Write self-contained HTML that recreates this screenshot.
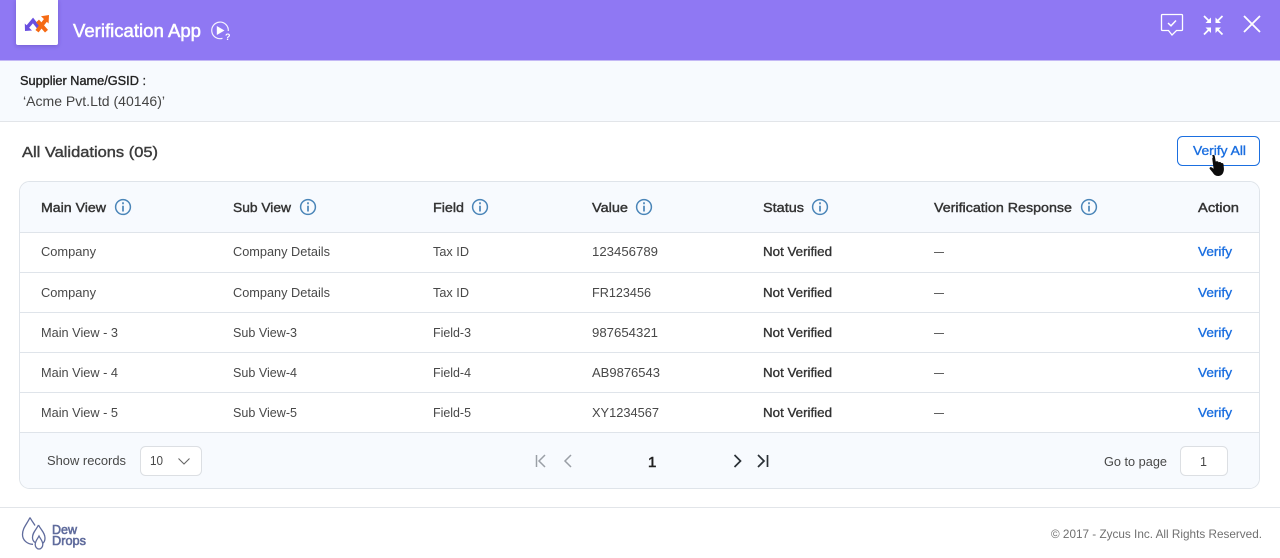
<!DOCTYPE html>
<html><head><meta charset="utf-8"><title>Verification App</title>
<style>
html,body{margin:0;padding:0;width:1280px;height:558px;overflow:hidden;background:#fff}
svg{display:block}
text{font-family:"Liberation Sans",sans-serif;font-size:13px;fill:#484848}
.h{fill:#333;stroke:#333;stroke-width:.4}
.s{fill:#333;stroke:#333;stroke-width:.35}
.v{fill:#1b6fe0;stroke:#1b6fe0;stroke-width:.35}
.i circle{fill:none;stroke:#4a85b8;stroke-width:1.5}
.i path{fill:none;stroke:#4a85b8;stroke-width:1.7}
</style></head><body>
<svg width="1280" height="558" viewBox="0 0 1280 558" xmlns="http://www.w3.org/2000/svg">
<defs>
<filter id="sh" x="-30%" y="-30%" width="160%" height="160%"><feDropShadow dx="0" dy="1" stdDeviation="2" flood-color="#3a2a90" flood-opacity=".35"/></filter>
<g id="info" class="i"><circle cx="0" cy="0" r="7.4"/><path d="M0-1.200V4.500M0-4.800V-2.800"/></g>
</defs>
<rect width="1280" height="558" fill="#fff"/>
<rect width="1280" height="60" fill="#8f78f3"/>
<rect y="60" width="1280" height="1" fill="#c4b8f5"/>
<rect y="61" width="1280" height="60" fill="#f7fafe"/>
<rect y="121" width="1280" height="1" fill="#e2e5e9"/>
<!-- logo -->
<path d="M16 0H58V43a2 2 0 0 1-2 2H18a2 2 0 0 1-2-2Z" fill="#fff" filter="url(#sh)"/>
<path d="M27.500 27L33 20.500L38.500 27.500" fill="none" stroke="#6a4fe0" stroke-width="3.600"/>
<path d="M24.800 23.500L25 31L32 30.500Z" fill="#6a4fe0"/>
<path d="M37.500 21L46.500 31.200M37 31.200L46.500 19" fill="none" stroke="#f56a14" stroke-width="4"/>
<path d="M41 16.200L49 15L48.600 23.500Z" fill="#f56a14"/>
<text x="73" y="37" style="font-size:18px;fill:#fff;stroke:#fff;stroke-width:.5" textLength="128" lengthAdjust="spacingAndGlyphs">Verification App</text>
<!-- video help icon -->
<path d="M222.500 38.300A8.300 8.300 0 1 1 228.300 31" fill="none" stroke="#fff" stroke-width="1.200" opacity=".9"/>
<path d="M216.800 26L224.500 30.500L216.800 35Z" fill="#fff"/>
<text x="225" y="40" style="font-size:9px;fill:#fff;font-weight:bold">?</text>
<!-- header right icons -->
<path d="M1162.500 14.500H1181.500a1 1 0 0 1 1 1V29.500a1 1 0 0 1-1 1H1176.500L1172 35L1168.500 30.500H1162.500a1 1 0 0 1-1-1V15.500a1 1 0 0 1 1-1Z" fill="none" stroke="#fff" stroke-width="1.300"/>
<path d="M1168 23L1171 25.800L1176 20.500" fill="none" stroke="#fff" stroke-width="1.500"/>
<g fill="none" stroke="#fff" stroke-width="1.800">
<path d="M1204 16L1209 21"/><path d="M1222.500 16L1217.500 21"/><path d="M1204 34.500L1209 29.500"/><path d="M1222.500 34.500L1217.500 29.500"/>
<path d="M1244 16L1260 32M1260 16L1244 32"/>
</g>
<g fill="#fff">
<path d="M1211 23H1205.500L1211 17.500Z"/><path d="M1215.500 23H1221L1215.500 17.500Z"/><path d="M1211 27.500H1205.500L1211 33Z"/><path d="M1215.500 27.500H1221L1215.500 33Z"/>
</g>
<!-- supplier -->
<text x="20" y="85" style="fill:#222;stroke:#222;stroke-width:.35;font-size:13px" textLength="126" lengthAdjust="spacingAndGlyphs">Supplier Name/GSID :</text>
<text x="23" y="106" style="font-size:14px;fill:#444" textLength="142" lengthAdjust="spacingAndGlyphs">‘Acme Pvt.Ltd (40146)’</text>
<text x="22" y="157" style="font-size:15px;fill:#3c3c3c;stroke:#3c3c3c;stroke-width:.4" textLength="136" lengthAdjust="spacingAndGlyphs">All Validations (05)</text>
<!-- verify all -->
<rect x="1177.500" y="136.500" width="82" height="29" rx="5" fill="#fff" stroke="#1b6fe0"/>
<text x="1193" y="155" class="v" textLength="53" lengthAdjust="spacingAndGlyphs">Verify All</text>
<!-- card -->
<rect x="19.500" y="181.500" width="1240" height="307" rx="10" fill="#fff" stroke="#dfe4ea"/>
<path d="M20 232V192a10 10 0 0 1 10-10H1249a10 10 0 0 1 10 10V232Z" fill="#f7fafe"/>
<path d="M20 433H1259V478a10 10 0 0 1-10 10H30a10 10 0 0 1-10-10Z" fill="#f7fafe"/>
<g fill="#dfe4ea"><rect x="20" y="232" width="1239" height="1"/><rect x="20" y="272" width="1239" height="1"/><rect x="20" y="312" width="1239" height="1"/><rect x="20" y="352" width="1239" height="1"/><rect x="20" y="392" width="1239" height="1"/><rect x="20" y="432" width="1239" height="1"/></g>
<!-- table head -->
<text x="41" y="212" class="h" textLength="65" lengthAdjust="spacingAndGlyphs">Main View</text><use href="#info" x="123" y="207"/>
<text x="233" y="212" class="h" textLength="58" lengthAdjust="spacingAndGlyphs">Sub View</text><use href="#info" x="308" y="207"/>
<text x="433" y="212" class="h" textLength="31" lengthAdjust="spacingAndGlyphs">Field</text><use href="#info" x="480" y="207"/>
<text x="592" y="212" class="h" textLength="36" lengthAdjust="spacingAndGlyphs">Value</text><use href="#info" x="644" y="207"/>
<text x="763" y="212" class="h" textLength="41" lengthAdjust="spacingAndGlyphs">Status</text><use href="#info" x="820" y="207"/>
<text x="934" y="212" class="h" textLength="138" lengthAdjust="spacingAndGlyphs">Verification Response</text><use href="#info" x="1089" y="207"/>
<text x="1198" y="212" class="h" textLength="41" lengthAdjust="spacingAndGlyphs">Action</text>
<!-- rows -->
<text x="41" y="256" textLength="55" lengthAdjust="spacingAndGlyphs">Company</text><text x="233" y="256" textLength="97" lengthAdjust="spacingAndGlyphs">Company Details</text><text x="433" y="256" textLength="36" lengthAdjust="spacingAndGlyphs">Tax ID</text><text x="592" y="256" textLength="66" lengthAdjust="spacingAndGlyphs">123456789</text><text x="763" y="256" class="s" textLength="69" lengthAdjust="spacingAndGlyphs">Not Verified</text><text x="934" y="256" textLength="10" lengthAdjust="spacingAndGlyphs">—</text><text x="1198" y="256" class="v" textLength="34" lengthAdjust="spacingAndGlyphs">Verify</text>
<text x="41" y="297" textLength="55" lengthAdjust="spacingAndGlyphs">Company</text><text x="233" y="297" textLength="97" lengthAdjust="spacingAndGlyphs">Company Details</text><text x="433" y="297" textLength="36" lengthAdjust="spacingAndGlyphs">Tax ID</text><text x="592" y="297" textLength="59" lengthAdjust="spacingAndGlyphs">FR123456</text><text x="763" y="297" class="s" textLength="69" lengthAdjust="spacingAndGlyphs">Not Verified</text><text x="934" y="297" textLength="10" lengthAdjust="spacingAndGlyphs">—</text><text x="1198" y="297" class="v" textLength="34" lengthAdjust="spacingAndGlyphs">Verify</text>
<text x="41" y="337" textLength="77" lengthAdjust="spacingAndGlyphs">Main View - 3</text><text x="233" y="337" textLength="64" lengthAdjust="spacingAndGlyphs">Sub View-3</text><text x="433" y="337" textLength="38" lengthAdjust="spacingAndGlyphs">Field-3</text><text x="592" y="337" textLength="66" lengthAdjust="spacingAndGlyphs">987654321</text><text x="763" y="337" class="s" textLength="69" lengthAdjust="spacingAndGlyphs">Not Verified</text><text x="934" y="337" textLength="10" lengthAdjust="spacingAndGlyphs">—</text><text x="1198" y="337" class="v" textLength="34" lengthAdjust="spacingAndGlyphs">Verify</text>
<text x="41" y="377" textLength="77" lengthAdjust="spacingAndGlyphs">Main View - 4</text><text x="233" y="377" textLength="64" lengthAdjust="spacingAndGlyphs">Sub View-4</text><text x="433" y="377" textLength="38" lengthAdjust="spacingAndGlyphs">Field-4</text><text x="592" y="377" textLength="68" lengthAdjust="spacingAndGlyphs">AB9876543</text><text x="763" y="377" class="s" textLength="69" lengthAdjust="spacingAndGlyphs">Not Verified</text><text x="934" y="377" textLength="10" lengthAdjust="spacingAndGlyphs">—</text><text x="1198" y="377" class="v" textLength="34" lengthAdjust="spacingAndGlyphs">Verify</text>
<text x="41" y="417" textLength="77" lengthAdjust="spacingAndGlyphs">Main View - 5</text><text x="233" y="417" textLength="64" lengthAdjust="spacingAndGlyphs">Sub View-5</text><text x="433" y="417" textLength="38" lengthAdjust="spacingAndGlyphs">Field-5</text><text x="592" y="417" textLength="67" lengthAdjust="spacingAndGlyphs">XY1234567</text><text x="763" y="417" class="s" textLength="69" lengthAdjust="spacingAndGlyphs">Not Verified</text><text x="934" y="417" textLength="10" lengthAdjust="spacingAndGlyphs">—</text><text x="1198" y="417" class="v" textLength="34" lengthAdjust="spacingAndGlyphs">Verify</text>
<!-- table footer -->
<text x="47" y="465" textLength="79" lengthAdjust="spacingAndGlyphs">Show records</text>
<rect x="140.500" y="446.500" width="61" height="29" rx="5" fill="#fff" stroke="#dcdfe3"/>
<text x="150" y="465" textLength="13" lengthAdjust="spacingAndGlyphs">10</text>
<path d="M178.500 458.500L184 464L189.500 458.500" fill="none" stroke="#666" stroke-width="1.100"/>
<g fill="none" stroke-width="1.500">
<path d="M536.500 455V467M545 455L539 461L545 467" stroke="#9a9fa6"/>
<path d="M571 455L565 461L571 467" stroke="#9a9fa6"/>
<path d="M734.500 455L740.500 461L734.500 467" stroke="#2a3036" stroke-width="1.700"/>
<path d="M758 455L764 461L758 467" stroke="#2a3036" stroke-width="1.700"/>
<path d="M767.500 455V467" stroke="#2a3036" stroke-width="1.700"/>
</g>
<text x="648" y="467" style="font-size:15px;fill:#222;stroke:#222;stroke-width:.6">1</text>
<text x="1104" y="466" textLength="63" lengthAdjust="spacingAndGlyphs">Go to page</text>
<rect x="1180.500" y="446.500" width="47" height="29" rx="5" fill="#fff" stroke="#dcdfe3"/>
<text x="1200" y="466" style="font-size:12.500px">1</text>
<!-- cursor -->
<path d="M1212.200 155.300c1-.8 2.400-.3 2.600 1l.9 5.200 .7-.2c1-.2 1.900 .1 2.200 .9l.6-.1c1.100-.2 1.900 .2 2.100 1c1.100-.2 2 .2 2.200 1.100l.4 4.300c.2 3.300-1.300 7.400-5.500 7.500c-3 .1-4.400-1.400-5.700-3.500l-2.900-3.500c-.8-1.100 .6-2.600 1.900-1.600l1.900 1.400l-1.300-9.700c-.1-.8 .1-1.400 .6-1.700Z" fill="#0c0c0c"/>
<!-- footer -->
<rect y="507" width="1280" height="1" fill="#e2e5e9"/>
<g fill="none" stroke="#5f6b9c" stroke-width="1.300">
<path d="M30 517.500C27 524 22.500 528 22.500 534.500C22.500 540 27 544.300 33 544.300M30 517.500C31.500 520.500 33.500 523 35 525.500"/>
<path d="M38.500 525C36 530 32.500 532.500 32.500 537.500C32.500 539.500 33.500 541.500 35 542.500M38.500 525C41 530 45 533 45 538C45 540.500 44 542.500 42.500 543.500"/>
<path d="M39 536C37.500 539 35.200 541 35.200 544.500C35.200 547 37 549 39 549C41 549 42.800 547 42.800 544.500C42.800 541 40.500 539 39 536Z"/>
</g>
<text x="52" y="534" style="font-size:13px;fill:#5f6b9c;stroke:#5f6b9c;stroke-width:.6" textLength="25" lengthAdjust="spacingAndGlyphs">Dew</text>
<text x="52" y="545" style="font-size:13px;fill:#5f6b9c;stroke:#5f6b9c;stroke-width:.6" textLength="34" lengthAdjust="spacingAndGlyphs">Drops</text>
<text x="1051" y="538" style="font-size:12px;fill:#707070" textLength="211" lengthAdjust="spacingAndGlyphs">© 2017 - Zycus Inc. All Rights Reserved.</text>
</svg>
</body></html>
